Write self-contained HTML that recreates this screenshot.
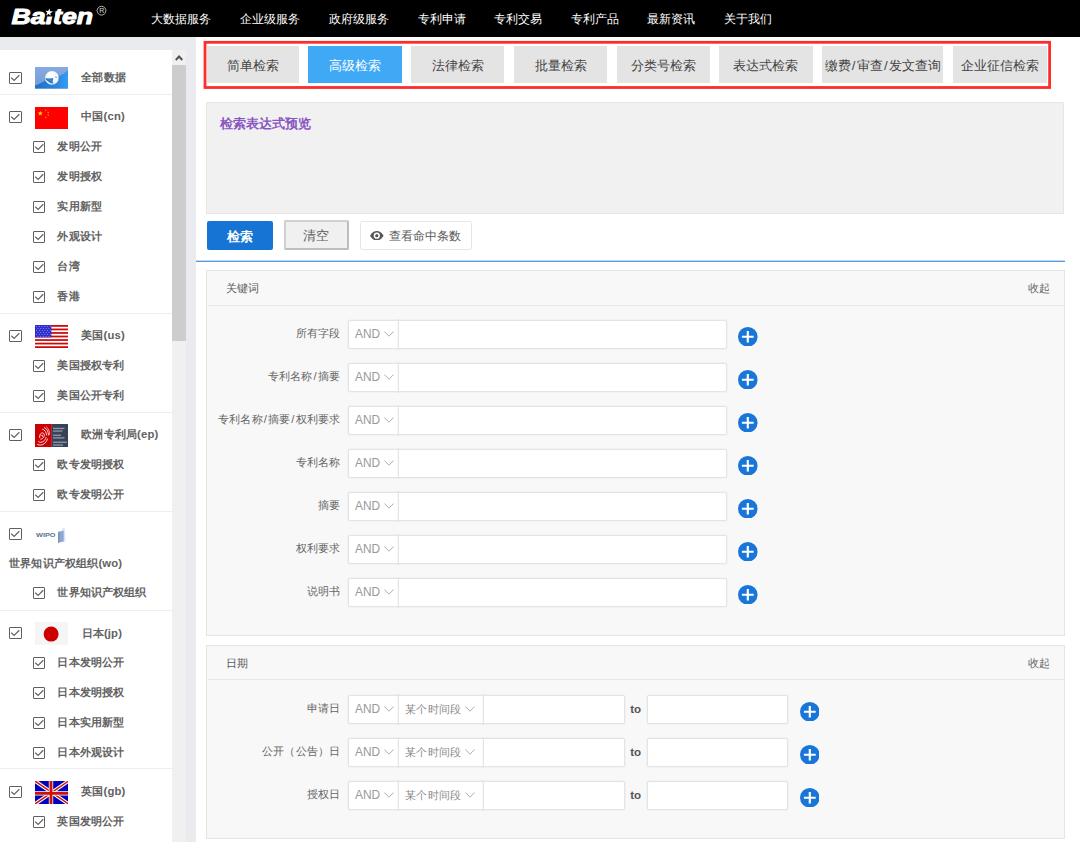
<!DOCTYPE html><html lang="zh"><head><meta charset="utf-8"><title>Baiten</title><style>
*{margin:0;padding:0;box-sizing:border-box}
html,body{width:1080px;height:842px;overflow:hidden;background:#fff}
body{position:relative;font-family:"Liberation Sans",sans-serif;color:#666}
.a{position:absolute;white-space:nowrap}
#nav{left:0;top:0;width:1080px;height:37px;background:#000}
.ni{top:9px;height:20px;line-height:20px;font-size:12.2px;color:#fff}
#strip{left:0;top:37px;width:196px;height:805px;background:#e9ebef}
#side{left:0;top:49.7px;width:172.2px;height:793px;background:#fff}
#track{left:172.2px;top:49.7px;width:14.2px;height:793px;background:#f0f0f0}
#thumb{left:172.2px;top:65.3px;width:13.7px;height:275.7px;background:#cdcdcd}
.sep{left:0;width:171.5px;height:1px;background:#eee}
.cb{width:12.5px;height:12.1px;border:1.1px solid #5f5f5f;border-radius:1px;background:#fff}
.cb svg{position:absolute;left:0;top:0;width:100%;height:100%}
.st{font-size:11.3px;letter-spacing:.15px;font-weight:bold;color:#626262;height:16px;line-height:16px}
.tab{top:45.9px;height:36.9px;line-height:39px;background:#e4e4e4;color:#444;font-size:13.2px;text-align:center}
.tab.on{background:#3fa9f5;color:#fff}
#red{left:203.9px;top:41.1px;width:1147px;height:47.6px;border:2.5px solid #f22}
#prev{left:206.3px;top:102.3px;width:858px;height:111.5px;background:#f1f1f1;border:1px solid #e6e6e6}
.panel{left:206.2px;width:858.8px;background:#f8f8f8;border:1px solid #e4e4e4}
.ph{left:0;top:0;right:0;border-bottom:1px solid #e6e6e6}
.lbl{font-size:11.3px;letter-spacing:.15px;color:#666;height:16px;line-height:16px;text-align:right}
.box{background:#fff;border:1px solid #e4e4e4;height:29px;box-shadow:0 0 0 1px rgba(0,0,0,.022)}
.and{font-size:11.9px;color:#999;height:16px;line-height:16px}
.chev{width:10px;height:6px}
.plus{width:19.6px;height:19.6px}
.hd{font-size:11.3px;letter-spacing:.2px;color:#5a5a5a;height:16px;line-height:16px}
</style></head><body>
<div id="nav" class="a">
<svg class="a" style="left:0;top:0" width="135" height="37" viewBox="0 0 135 37"><text x="11.6" y="24.1" font-family="Liberation Sans, sans-serif" font-weight="bold" font-style="italic" font-size="22.2" fill="#fff" stroke="#fff" stroke-width="1" stroke-linejoin="round" textLength="81.4" lengthAdjust="spacingAndGlyphs">Ba&#x131;ten</text><polygon points="47.2,16.4 54.6,16.4 55.6,11.5 48.2,11.5" fill="#000"/><polygon points="49.48,8.54 50.05,11.23 52.75,11.76 50.36,13.13 50.70,15.86 48.66,14.02 46.16,15.18 47.28,12.67 45.41,10.65 48.15,10.95" fill="#fff"/><circle cx="101.5" cy="10.7" r="4.4" fill="none" stroke="#d8d8d8" stroke-width="0.8"/><text x="99.3" y="13.3" font-family="Liberation Sans, sans-serif" font-size="7" fill="#d8d8d8">R</text></svg>
<div class="a ni" style="left:151px">大数据服务</div>
<div class="a ni" style="left:240px">企业级服务</div>
<div class="a ni" style="left:329px">政府级服务</div>
<div class="a ni" style="left:417.7px">专利申请</div>
<div class="a ni" style="left:494.3px">专利交易</div>
<div class="a ni" style="left:571px">专利产品</div>
<div class="a ni" style="left:647.3px">最新资讯</div>
<div class="a ni" style="left:723.7px">关于我们</div>
</div>
<div id="strip" class="a"></div><div id="side" class="a"></div><div id="track" class="a"></div><div id="thumb" class="a"></div>
<svg class="a" style="left:172.2px;top:49.4px" width="14.2" height="16" viewBox="0 0 14.2 16"><path d="M3.8 11 L7.05 7.5 L10.3 11" fill="none" stroke="#505050" stroke-width="1.9"/></svg>
<div class="a cb" style="left:9.0px;top:71.8px"><svg viewBox="0 0 13 12"><path d="M1.5 5.6 L5.1 8.9 L11.5 2.5" fill="none" stroke="#666" stroke-width="1.6"/></svg></div>
<svg class="a" style="left:34.8px;top:67.3px" width="33.4" height="21.6" viewBox="0 0 33.4 21.3" preserveAspectRatio="none"><defs><linearGradient id="g1" x1="0" y1="0" x2="0" y2="1"><stop offset="0" stop-color="#86abe0"/><stop offset="1" stop-color="#6f9bd8"/></linearGradient><linearGradient id="g2" x1="0" y1="0" x2="1" y2="0"><stop offset="0" stop-color="#1f70c6"/><stop offset="0.6" stop-color="#2a84dc"/><stop offset="1" stop-color="#379cf2"/></linearGradient><radialGradient id="g3" cx="0.42" cy="0.35" r="0.75"><stop offset="0" stop-color="#fff"/><stop offset="0.75" stop-color="#f2f6fb"/><stop offset="1" stop-color="#c8d8ea"/></radialGradient><clipPath id="gc"><circle cx="16.9" cy="10.8" r="6.8"/></clipPath></defs><rect width="33.4" height="21.3" fill="url(#g1)"/><path d="M0 21.3 L0 18.3 C6 16.5 9 13.5 14 12.2 C22 10.5 28 8 33.4 2.6 L33.4 21.3 Z" fill="url(#g2)"/><circle cx="16.9" cy="10.8" r="6.8" fill="url(#g3)"/><g clip-path="url(#gc)"><path d="M10 11.5 C12 10.7 14.5 11.7 16.4 11 C17.8 10.5 18.6 11.1 18.2 12.1 C17.6 13.5 17.4 14.6 18.6 16.3 C16.6 16.7 14.7 15.6 13.3 14.5 C11.9 13.4 10.8 12.5 10 11.5 Z" fill="#1e74cc" opacity=".9"/><path d="M19.6 9.6 c1.2 -.4 2.2 .2 2.6 1.2 c-.8 .2 -1.8 0 -2.6 -1.2z" fill="#6aa6e4" opacity=".8"/></g></svg>
<div class="a st" style="left:81.3px;top:69.2px">全部数据</div>
<div class="a sep" style="top:94.4px"></div>
<div class="a cb" style="left:9.0px;top:111.1px"><svg viewBox="0 0 13 12"><path d="M1.5 5.6 L5.1 8.9 L11.5 2.5" fill="none" stroke="#666" stroke-width="1.6"/></svg></div>
<svg class="a" style="left:34.6px;top:106.6px" width="33.5" height="22.6" viewBox="0 0 33.6 23" preserveAspectRatio="none"><rect width="33.6" height="23" fill="#fe0000"/><polygon points="5.30,3.80 5.93,5.63 7.87,5.67 6.33,6.83 6.89,8.68 5.30,7.58 3.71,8.68 4.27,6.83 2.73,5.67 4.67,5.63" fill="#ffde00"/><polygon points="10.80,2.35 11.02,2.99 11.70,3.01 11.16,3.42 11.36,4.07 10.80,3.68 10.24,4.07 10.44,3.42 9.90,3.01 10.58,2.99" fill="#ffde00"/><polygon points="13.20,4.55 13.42,5.19 14.10,5.21 13.56,5.62 13.76,6.27 13.20,5.88 12.64,6.27 12.84,5.62 12.30,5.21 12.98,5.19" fill="#ffde00"/><polygon points="13.20,7.25 13.42,7.89 14.10,7.91 13.56,8.32 13.76,8.97 13.20,8.58 12.64,8.97 12.84,8.32 12.30,7.91 12.98,7.89" fill="#ffde00"/><polygon points="10.90,9.85 11.12,10.49 11.80,10.51 11.26,10.92 11.46,11.57 10.90,11.18 10.34,11.57 10.54,10.92 10.00,10.51 10.68,10.49" fill="#ffde00"/></svg>
<div class="a st" style="left:81.3px;top:108.3px">中国(cn)</div>
<div class="a cb" style="left:32.8px;top:141.0px"><svg viewBox="0 0 13 12"><path d="M1.5 5.6 L5.1 8.9 L11.5 2.5" fill="none" stroke="#666" stroke-width="1.6"/></svg></div>
<div class="a st" style="left:57.4px;top:138.4px">发明公开</div>
<div class="a cb" style="left:32.8px;top:171.0px"><svg viewBox="0 0 13 12"><path d="M1.5 5.6 L5.1 8.9 L11.5 2.5" fill="none" stroke="#666" stroke-width="1.6"/></svg></div>
<div class="a st" style="left:57.4px;top:168.4px">发明授权</div>
<div class="a cb" style="left:32.8px;top:201.0px"><svg viewBox="0 0 13 12"><path d="M1.5 5.6 L5.1 8.9 L11.5 2.5" fill="none" stroke="#666" stroke-width="1.6"/></svg></div>
<div class="a st" style="left:57.4px;top:198.4px">实用新型</div>
<div class="a cb" style="left:32.8px;top:231.0px"><svg viewBox="0 0 13 12"><path d="M1.5 5.6 L5.1 8.9 L11.5 2.5" fill="none" stroke="#666" stroke-width="1.6"/></svg></div>
<div class="a st" style="left:57.4px;top:228.4px">外观设计</div>
<div class="a cb" style="left:32.8px;top:261.0px"><svg viewBox="0 0 13 12"><path d="M1.5 5.6 L5.1 8.9 L11.5 2.5" fill="none" stroke="#666" stroke-width="1.6"/></svg></div>
<div class="a st" style="left:57.4px;top:258.4px">台湾</div>
<div class="a cb" style="left:32.8px;top:291.0px"><svg viewBox="0 0 13 12"><path d="M1.5 5.6 L5.1 8.9 L11.5 2.5" fill="none" stroke="#666" stroke-width="1.6"/></svg></div>
<div class="a st" style="left:57.4px;top:288.4px">香港</div>
<div class="a sep" style="top:312.7px"></div>
<div class="a cb" style="left:9.0px;top:329.9px"><svg viewBox="0 0 13 12"><path d="M1.5 5.6 L5.1 8.9 L11.5 2.5" fill="none" stroke="#666" stroke-width="1.6"/></svg></div>
<svg class="a" style="left:34.5px;top:325.0px" width="33.6" height="23" viewBox="0 0 33.6 23"><rect width="33.6" height="23" fill="#fff"/><rect x="0" y="0.00" width="33.6" height="1.77" fill="#cc0a0a"/><rect x="0" y="3.54" width="33.6" height="1.77" fill="#cc0a0a"/><rect x="0" y="7.08" width="33.6" height="1.77" fill="#cc0a0a"/><rect x="0" y="10.62" width="33.6" height="1.77" fill="#cc0a0a"/><rect x="0" y="14.15" width="33.6" height="1.77" fill="#cc0a0a"/><rect x="0" y="17.69" width="33.6" height="1.77" fill="#cc0a0a"/><rect x="0" y="21.23" width="33.6" height="1.77" fill="#cc0a0a"/><rect x="0" y="0" width="16.4" height="12.38" fill="#2c2ccc"/><circle cx="1.60" cy="1.40" r="0.55" fill="#8a8ae8"/><circle cx="4.35" cy="1.40" r="0.55" fill="#8a8ae8"/><circle cx="7.10" cy="1.40" r="0.55" fill="#8a8ae8"/><circle cx="9.85" cy="1.40" r="0.55" fill="#8a8ae8"/><circle cx="12.60" cy="1.40" r="0.55" fill="#8a8ae8"/><circle cx="15.35" cy="1.40" r="0.55" fill="#8a8ae8"/><circle cx="2.95" cy="3.40" r="0.55" fill="#8a8ae8"/><circle cx="5.70" cy="3.40" r="0.55" fill="#8a8ae8"/><circle cx="8.45" cy="3.40" r="0.55" fill="#8a8ae8"/><circle cx="11.20" cy="3.40" r="0.55" fill="#8a8ae8"/><circle cx="13.95" cy="3.40" r="0.55" fill="#8a8ae8"/><circle cx="1.60" cy="5.40" r="0.55" fill="#8a8ae8"/><circle cx="4.35" cy="5.40" r="0.55" fill="#8a8ae8"/><circle cx="7.10" cy="5.40" r="0.55" fill="#8a8ae8"/><circle cx="9.85" cy="5.40" r="0.55" fill="#8a8ae8"/><circle cx="12.60" cy="5.40" r="0.55" fill="#8a8ae8"/><circle cx="15.35" cy="5.40" r="0.55" fill="#8a8ae8"/><circle cx="2.95" cy="7.40" r="0.55" fill="#8a8ae8"/><circle cx="5.70" cy="7.40" r="0.55" fill="#8a8ae8"/><circle cx="8.45" cy="7.40" r="0.55" fill="#8a8ae8"/><circle cx="11.20" cy="7.40" r="0.55" fill="#8a8ae8"/><circle cx="13.95" cy="7.40" r="0.55" fill="#8a8ae8"/><circle cx="1.60" cy="9.40" r="0.55" fill="#8a8ae8"/><circle cx="4.35" cy="9.40" r="0.55" fill="#8a8ae8"/><circle cx="7.10" cy="9.40" r="0.55" fill="#8a8ae8"/><circle cx="9.85" cy="9.40" r="0.55" fill="#8a8ae8"/><circle cx="12.60" cy="9.40" r="0.55" fill="#8a8ae8"/><circle cx="15.35" cy="9.40" r="0.55" fill="#8a8ae8"/><circle cx="2.95" cy="11.40" r="0.55" fill="#8a8ae8"/><circle cx="5.70" cy="11.40" r="0.55" fill="#8a8ae8"/><circle cx="8.45" cy="11.40" r="0.55" fill="#8a8ae8"/><circle cx="11.20" cy="11.40" r="0.55" fill="#8a8ae8"/><circle cx="13.95" cy="11.40" r="0.55" fill="#8a8ae8"/></svg>
<div class="a st" style="left:81.3px;top:326.9px">美国(us)</div>
<div class="a cb" style="left:32.8px;top:359.7px"><svg viewBox="0 0 13 12"><path d="M1.5 5.6 L5.1 8.9 L11.5 2.5" fill="none" stroke="#666" stroke-width="1.6"/></svg></div>
<div class="a st" style="left:57.4px;top:357.1px">美国授权专利</div>
<div class="a cb" style="left:32.8px;top:389.7px"><svg viewBox="0 0 13 12"><path d="M1.5 5.6 L5.1 8.9 L11.5 2.5" fill="none" stroke="#666" stroke-width="1.6"/></svg></div>
<div class="a st" style="left:57.4px;top:387.1px">美国公开专利</div>
<div class="a sep" style="top:411.6px"></div>
<div class="a cb" style="left:9.0px;top:428.9px"><svg viewBox="0 0 13 12"><path d="M1.5 5.6 L5.1 8.9 L11.5 2.5" fill="none" stroke="#666" stroke-width="1.6"/></svg></div>
<svg class="a" style="left:34.5px;top:424.0px" width="33.6" height="23" viewBox="0 0 33.6 23"><rect width="16.8" height="23" fill="#cc0000"/><rect x="16.6" width="17" height="23" fill="#3a4256"/><g fill="none" stroke="#fff" stroke-width="0.9" stroke-linecap="round" opacity=".95"><path d="M2.5 20.5 C7 22.5 11 19.5 12.5 15"/><path d="M3.6 17.8 C7 19.6 10 17 11 13.5"/><path d="M4.6 13.5 C4 9.5 7.5 7.5 9 9.8 C10.2 12 8 15.2 5.8 15.2"/><path d="M6.3 11.3 C6.9 10.3 7.9 11 7.5 12.4"/><path d="M7.6 5.2 C10 5.8 11.4 8.4 11.6 11"/><path d="M9.4 3.6 C12 4.6 13.4 7.6 13.5 11"/><path d="M11.4 2.8 C13.6 4.4 14.6 7.4 14.6 10.4" stroke="#f2b0b0"/></g><rect x="18" y="3.8" width="11.5" height="1.3" fill="#8f98ae"/><rect x="18" y="6.4" width="9.5" height="1.3" fill="#8f98ae"/><rect x="18" y="10.6" width="8.0" height="1.3" fill="#8f98ae"/><rect x="18" y="13.2" width="11.5" height="1.3" fill="#8f98ae"/><rect x="18" y="17.6" width="13.8" height="1.3" fill="#8f98ae"/><rect x="18" y="20.4" width="10.0" height="1.3" fill="#8f98ae"/></svg>
<div class="a st" style="left:81.3px;top:425.7px">欧洲专利局(ep)</div>
<div class="a cb" style="left:32.8px;top:458.7px"><svg viewBox="0 0 13 12"><path d="M1.5 5.6 L5.1 8.9 L11.5 2.5" fill="none" stroke="#666" stroke-width="1.6"/></svg></div>
<div class="a st" style="left:57.4px;top:456.1px">欧专发明授权</div>
<div class="a cb" style="left:32.8px;top:488.7px"><svg viewBox="0 0 13 12"><path d="M1.5 5.6 L5.1 8.9 L11.5 2.5" fill="none" stroke="#666" stroke-width="1.6"/></svg></div>
<div class="a st" style="left:57.4px;top:486.1px">欧专发明公开</div>
<div class="a sep" style="top:510.5px"></div>
<div class="a cb" style="left:9.0px;top:528.1px"><svg viewBox="0 0 13 12"><path d="M1.5 5.6 L5.1 8.9 L11.5 2.5" fill="none" stroke="#666" stroke-width="1.6"/></svg></div>
<svg class="a" style="left:34.5px;top:526px" width="33.6" height="18" viewBox="0 0 33.6 18"><text x="1" y="10.9" font-family="Liberation Sans, sans-serif" font-weight="bold" font-size="6.1" fill="#5a7192" textLength="19.5" lengthAdjust="spacingAndGlyphs">WIPO</text><path d="M27.2 2.2 L29.6 1.2 L30.6 15 L28.6 16 Z" fill="#d6e6f4"/><path d="M23 6 L28.6 4.6 L28.8 15.6 L23 16.8 Z" fill="#8ea6d2"/><path d="M23 6 L24.6 5.6 L24.6 16.4 L23 16.8 Z" fill="#7a93c6"/></svg>
<div class="a st" style="left:9.2px;top:554.7px">世界知识产权组织(wo)</div>
<div class="a cb" style="left:32.8px;top:586.9px"><svg viewBox="0 0 13 12"><path d="M1.5 5.6 L5.1 8.9 L11.5 2.5" fill="none" stroke="#666" stroke-width="1.6"/></svg></div>
<div class="a st" style="left:57.4px;top:584.3px">世界知识产权组织</div>
<div class="a sep" style="top:610.0px"></div>
<div class="a cb" style="left:9.0px;top:627.0px"><svg viewBox="0 0 13 12"><path d="M1.5 5.6 L5.1 8.9 L11.5 2.5" fill="none" stroke="#666" stroke-width="1.6"/></svg></div>
<svg class="a" style="left:34.6px;top:622.2px" width="33" height="22.8" viewBox="0 0 33 22.8"><rect width="33" height="22.8" fill="#f5f5f5"/><circle cx="16.1" cy="12.1" r="7.5" fill="#cc0000"/></svg>
<div class="a st" style="left:81.6px;top:624.7px">日本(jp)</div>
<div class="a cb" style="left:32.8px;top:656.8px"><svg viewBox="0 0 13 12"><path d="M1.5 5.6 L5.1 8.9 L11.5 2.5" fill="none" stroke="#666" stroke-width="1.6"/></svg></div>
<div class="a st" style="left:57.4px;top:654.2px">日本发明公开</div>
<div class="a cb" style="left:32.8px;top:686.8px"><svg viewBox="0 0 13 12"><path d="M1.5 5.6 L5.1 8.9 L11.5 2.5" fill="none" stroke="#666" stroke-width="1.6"/></svg></div>
<div class="a st" style="left:57.4px;top:684.2px">日本发明授权</div>
<div class="a cb" style="left:32.8px;top:716.8px"><svg viewBox="0 0 13 12"><path d="M1.5 5.6 L5.1 8.9 L11.5 2.5" fill="none" stroke="#666" stroke-width="1.6"/></svg></div>
<div class="a st" style="left:57.4px;top:714.2px">日本实用新型</div>
<div class="a cb" style="left:32.8px;top:746.8px"><svg viewBox="0 0 13 12"><path d="M1.5 5.6 L5.1 8.9 L11.5 2.5" fill="none" stroke="#666" stroke-width="1.6"/></svg></div>
<div class="a st" style="left:57.4px;top:744.2px">日本外观设计</div>
<div class="a sep" style="top:768.3px"></div>
<div class="a cb" style="left:9.0px;top:786.1px"><svg viewBox="0 0 13 12"><path d="M1.5 5.6 L5.1 8.9 L11.5 2.5" fill="none" stroke="#666" stroke-width="1.6"/></svg></div>
<svg class="a" style="left:34.5px;top:781.0px" width="33.6" height="23" viewBox="0 0 33.6 23"><clipPath id="gbc"><rect width="33.6" height="23"/></clipPath><g clip-path="url(#gbc)"><rect width="33.6" height="23" fill="#0000bf"/><path d="M0 0 L33.6 23 M33.6 0 L0 23" stroke="#fff" stroke-width="3.6"/><path d="M0 0 L33.6 23 M33.6 0 L0 23" stroke="#d01a10" stroke-width="1.5"/><path d="M16 0 V23 M0 12.4 H33.6" stroke="#fff" stroke-width="4.4"/><path d="M16 0 V23 M0 12.4 H33.6" stroke="#d01000" stroke-width="2.9"/></g></svg>
<div class="a st" style="left:81.3px;top:783.1px">英国(gb)</div>
<div class="a cb" style="left:32.8px;top:815.5px"><svg viewBox="0 0 13 12"><path d="M1.5 5.6 L5.1 8.9 L11.5 2.5" fill="none" stroke="#666" stroke-width="1.6"/></svg></div>
<div class="a st" style="left:57.4px;top:812.9px">英国发明公开</div>
<svg class="a" style="left:200px;top:38px" width="860" height="56" viewBox="200 38 860 56"><rect x="205" y="42.3" width="844.6" height="45.2" fill="none" stroke="#ff2c2c" stroke-width="2.8"/></svg>
<div class="a tab" style="left:207.0px;width:92.0px">简单检索</div>
<div class="a tab on" style="left:308.2px;width:93.6px">高级检索</div>
<div class="a tab" style="left:411.0px;width:93.4px">法律检索</div>
<div class="a tab" style="left:513.9px;width:93.3px">批量检索</div>
<div class="a tab" style="left:616.7px;width:93.3px">分类号检索</div>
<div class="a tab" style="left:719.2px;width:93.6px">表达式检索</div>
<div class="a tab" style="left:822.2px;width:121.1px">缴费<span style="margin:0 1.25px">/</span>审查<span style="margin:0 1.25px">/</span>发文查询</div>
<div class="a tab" style="left:953.0px;width:93.7px">企业征信检索</div>
<div id="prev" class="a"></div>
<div class="a" style="left:220.3px;top:114.6px;height:18px;line-height:18px;font-size:13.05px;font-weight:bold;color:#8a56c2">检索表达式预览</div>
<div class="a" style="left:207.3px;top:220.6px;width:65.7px;height:29.6px;background:#1574d4;border-radius:2px;color:#fff;font-weight:bold;font-size:13.2px;line-height:31.6px;text-align:center">检索</div>
<div class="a" style="left:283.6px;top:220.4px;width:65.8px;height:29.9px;background:#f0f0f0;border:2px solid;border-color:#d0d0d0 #bdbdbd #bdbdbd #d0d0d0;border-radius:2px;color:#5e5e5e;font-size:13.2px;line-height:27.6px;text-align:center">清空</div>
<div class="a" style="left:359.9px;top:220.6px;width:111.8px;height:29.6px;background:#fff;border:1px solid #e6e6e6;border-radius:2.5px"></div>
<svg class="a" style="left:370.2px;top:230.6px" width="13.6" height="9.4" viewBox="0 0 13.6 9.4"><path d="M0 4.7 C2 1.2 4.4 0 6.8 0 C9.2 0 11.6 1.2 13.6 4.7 C11.6 8.2 9.2 9.4 6.8 9.4 C4.4 9.4 2 8.2 0 4.7 Z" fill="#555"/><circle cx="6.8" cy="4.7" r="3.1" fill="#fff"/><circle cx="6.8" cy="4.7" r="1.6" fill="#555"/></svg>
<div class="a" style="left:388.9px;top:228.4px;height:17px;line-height:17px;font-size:12.3px;letter-spacing:.1px;color:#5a5a5a">查看命中条数</div>
<div class="a" style="left:196px;top:260px;width:869px;height:1px;background:#bfd8f4"></div><div class="a" style="left:196px;top:261px;width:869px;height:1px;background:#5a9ae0"></div>
<div class="a panel" style="top:270.4px;height:365.6px"></div>
<div class="a" style="left:207.5px;top:304.8px;width:856.5px;height:1px;background:#e8e8e8"></div>
<div class="a hd" style="left:226px;top:279.8px">关键词</div>
<div class="a hd" style="left:1027.8px;top:279.8px;color:#666">收起</div>
<div class="a lbl" style="left:196px;width:144.2px;top:324.9px">所有字段</div>
<div class="a box" style="left:347.6px;top:319.8px;width:51.4px;border-radius:2px 0 0 2px"></div>
<div class="a box" style="left:398px;top:319.8px;width:329px;border-radius:0 2px 2px 0"></div>
<div class="a and" style="left:355.1px;top:326.1px">AND</div>
<svg class="a chev" style="left:384.4px;top:330.8px" viewBox="0 0 10 6"><path d="M0.4 0.5 L5 5.2 L9.6 0.5" fill="none" stroke="#adadad" stroke-width="1"/></svg>
<svg class="a plus" style="left:738.0px;top:326.9px" viewBox="0 0 20 20"><circle cx="10" cy="10" r="10" fill="#1976d8"/><path d="M4 10 H16 M10 4.2 V15.8" stroke="#fff" stroke-width="2.2" fill="none"/></svg>
<div class="a lbl" style="left:196px;width:144.2px;top:367.9px">专利名称<span style="margin:0 1px">/</span>摘要</div>
<div class="a box" style="left:347.6px;top:362.8px;width:51.4px;border-radius:2px 0 0 2px"></div>
<div class="a box" style="left:398px;top:362.8px;width:329px;border-radius:0 2px 2px 0"></div>
<div class="a and" style="left:355.1px;top:369.1px">AND</div>
<svg class="a chev" style="left:384.4px;top:373.8px" viewBox="0 0 10 6"><path d="M0.4 0.5 L5 5.2 L9.6 0.5" fill="none" stroke="#adadad" stroke-width="1"/></svg>
<svg class="a plus" style="left:738.0px;top:369.9px" viewBox="0 0 20 20"><circle cx="10" cy="10" r="10" fill="#1976d8"/><path d="M4 10 H16 M10 4.2 V15.8" stroke="#fff" stroke-width="2.2" fill="none"/></svg>
<div class="a lbl" style="left:196px;width:144.2px;top:410.9px">专利名称<span style="margin:0 1px">/</span>摘要<span style="margin:0 1px">/</span>权利要求</div>
<div class="a box" style="left:347.6px;top:405.8px;width:51.4px;border-radius:2px 0 0 2px"></div>
<div class="a box" style="left:398px;top:405.8px;width:329px;border-radius:0 2px 2px 0"></div>
<div class="a and" style="left:355.1px;top:412.1px">AND</div>
<svg class="a chev" style="left:384.4px;top:416.8px" viewBox="0 0 10 6"><path d="M0.4 0.5 L5 5.2 L9.6 0.5" fill="none" stroke="#adadad" stroke-width="1"/></svg>
<svg class="a plus" style="left:738.0px;top:412.9px" viewBox="0 0 20 20"><circle cx="10" cy="10" r="10" fill="#1976d8"/><path d="M4 10 H16 M10 4.2 V15.8" stroke="#fff" stroke-width="2.2" fill="none"/></svg>
<div class="a lbl" style="left:196px;width:144.2px;top:453.9px">专利名称</div>
<div class="a box" style="left:347.6px;top:448.8px;width:51.4px;border-radius:2px 0 0 2px"></div>
<div class="a box" style="left:398px;top:448.8px;width:329px;border-radius:0 2px 2px 0"></div>
<div class="a and" style="left:355.1px;top:455.1px">AND</div>
<svg class="a chev" style="left:384.4px;top:459.8px" viewBox="0 0 10 6"><path d="M0.4 0.5 L5 5.2 L9.6 0.5" fill="none" stroke="#adadad" stroke-width="1"/></svg>
<svg class="a plus" style="left:738.0px;top:455.9px" viewBox="0 0 20 20"><circle cx="10" cy="10" r="10" fill="#1976d8"/><path d="M4 10 H16 M10 4.2 V15.8" stroke="#fff" stroke-width="2.2" fill="none"/></svg>
<div class="a lbl" style="left:196px;width:144.2px;top:496.9px">摘要</div>
<div class="a box" style="left:347.6px;top:491.8px;width:51.4px;border-radius:2px 0 0 2px"></div>
<div class="a box" style="left:398px;top:491.8px;width:329px;border-radius:0 2px 2px 0"></div>
<div class="a and" style="left:355.1px;top:498.1px">AND</div>
<svg class="a chev" style="left:384.4px;top:502.8px" viewBox="0 0 10 6"><path d="M0.4 0.5 L5 5.2 L9.6 0.5" fill="none" stroke="#adadad" stroke-width="1"/></svg>
<svg class="a plus" style="left:738.0px;top:498.9px" viewBox="0 0 20 20"><circle cx="10" cy="10" r="10" fill="#1976d8"/><path d="M4 10 H16 M10 4.2 V15.8" stroke="#fff" stroke-width="2.2" fill="none"/></svg>
<div class="a lbl" style="left:196px;width:144.2px;top:539.9px">权利要求</div>
<div class="a box" style="left:347.6px;top:534.8px;width:51.4px;border-radius:2px 0 0 2px"></div>
<div class="a box" style="left:398px;top:534.8px;width:329px;border-radius:0 2px 2px 0"></div>
<div class="a and" style="left:355.1px;top:541.1px">AND</div>
<svg class="a chev" style="left:384.4px;top:545.8px" viewBox="0 0 10 6"><path d="M0.4 0.5 L5 5.2 L9.6 0.5" fill="none" stroke="#adadad" stroke-width="1"/></svg>
<svg class="a plus" style="left:738.0px;top:541.9px" viewBox="0 0 20 20"><circle cx="10" cy="10" r="10" fill="#1976d8"/><path d="M4 10 H16 M10 4.2 V15.8" stroke="#fff" stroke-width="2.2" fill="none"/></svg>
<div class="a lbl" style="left:196px;width:144.2px;top:582.9px">说明书</div>
<div class="a box" style="left:347.6px;top:577.8px;width:51.4px;border-radius:2px 0 0 2px"></div>
<div class="a box" style="left:398px;top:577.8px;width:329px;border-radius:0 2px 2px 0"></div>
<div class="a and" style="left:355.1px;top:584.1px">AND</div>
<svg class="a chev" style="left:384.4px;top:588.8px" viewBox="0 0 10 6"><path d="M0.4 0.5 L5 5.2 L9.6 0.5" fill="none" stroke="#adadad" stroke-width="1"/></svg>
<svg class="a plus" style="left:738.0px;top:584.9px" viewBox="0 0 20 20"><circle cx="10" cy="10" r="10" fill="#1976d8"/><path d="M4 10 H16 M10 4.2 V15.8" stroke="#fff" stroke-width="2.2" fill="none"/></svg>
<div class="a panel" style="top:645.3px;height:193.7px"></div>
<div class="a" style="left:207.5px;top:679.4px;width:856.5px;height:1px;background:#e8e8e8"></div>
<div class="a hd" style="left:226px;top:654.5px">日期</div>
<div class="a hd" style="left:1027.8px;top:654.5px;color:#666">收起</div>
<div class="a lbl" style="left:196px;width:144.2px;top:699.9px">申请日</div>
<div class="a box" style="left:347.6px;top:694.8px;width:51.4px;border-radius:2px 0 0 2px"></div>
<div class="a box" style="left:398px;top:694.8px;width:86px"></div>
<div class="a box" style="left:483px;top:694.8px;width:141.6px;border-radius:0 2px 2px 0"></div>
<div class="a and" style="left:355.1px;top:701.1px">AND</div>
<svg class="a chev" style="left:384.4px;top:705.8px" viewBox="0 0 10 6"><path d="M0.4 0.5 L5 5.2 L9.6 0.5" fill="none" stroke="#adadad" stroke-width="1"/></svg>
<div class="a and" style="left:405px;top:701.0px;font-size:11.3px;letter-spacing:.35px;color:#8c8c8c">某个时间段</div>
<svg class="a chev" style="left:464.8px;top:705.8px" viewBox="0 0 10 6"><path d="M0.4 0.5 L5 5.2 L9.6 0.5" fill="none" stroke="#adadad" stroke-width="1"/></svg>
<div class="a" style="left:630.2px;top:700.6px;height:16px;line-height:16px;font-size:11.6px;font-weight:bold;color:#555">to</div>
<div class="a box" style="left:646.6px;top:694.8px;width:141.8px;border-radius:2px"></div>
<svg class="a plus" style="left:799.5px;top:701.9px" viewBox="0 0 20 20"><circle cx="10" cy="10" r="10" fill="#1976d8"/><path d="M4 10 H16 M10 4.2 V15.8" stroke="#fff" stroke-width="2.2" fill="none"/></svg>
<div class="a lbl" style="left:196px;width:144.2px;top:742.9px">公开（公告）日</div>
<div class="a box" style="left:347.6px;top:737.8px;width:51.4px;border-radius:2px 0 0 2px"></div>
<div class="a box" style="left:398px;top:737.8px;width:86px"></div>
<div class="a box" style="left:483px;top:737.8px;width:141.6px;border-radius:0 2px 2px 0"></div>
<div class="a and" style="left:355.1px;top:744.1px">AND</div>
<svg class="a chev" style="left:384.4px;top:748.8px" viewBox="0 0 10 6"><path d="M0.4 0.5 L5 5.2 L9.6 0.5" fill="none" stroke="#adadad" stroke-width="1"/></svg>
<div class="a and" style="left:405px;top:744.0px;font-size:11.3px;letter-spacing:.35px;color:#8c8c8c">某个时间段</div>
<svg class="a chev" style="left:464.8px;top:748.8px" viewBox="0 0 10 6"><path d="M0.4 0.5 L5 5.2 L9.6 0.5" fill="none" stroke="#adadad" stroke-width="1"/></svg>
<div class="a" style="left:630.2px;top:743.6px;height:16px;line-height:16px;font-size:11.6px;font-weight:bold;color:#555">to</div>
<div class="a box" style="left:646.6px;top:737.8px;width:141.8px;border-radius:2px"></div>
<svg class="a plus" style="left:799.5px;top:744.9px" viewBox="0 0 20 20"><circle cx="10" cy="10" r="10" fill="#1976d8"/><path d="M4 10 H16 M10 4.2 V15.8" stroke="#fff" stroke-width="2.2" fill="none"/></svg>
<div class="a lbl" style="left:196px;width:144.2px;top:785.9px">授权日</div>
<div class="a box" style="left:347.6px;top:780.8px;width:51.4px;border-radius:2px 0 0 2px"></div>
<div class="a box" style="left:398px;top:780.8px;width:86px"></div>
<div class="a box" style="left:483px;top:780.8px;width:141.6px;border-radius:0 2px 2px 0"></div>
<div class="a and" style="left:355.1px;top:787.1px">AND</div>
<svg class="a chev" style="left:384.4px;top:791.8px" viewBox="0 0 10 6"><path d="M0.4 0.5 L5 5.2 L9.6 0.5" fill="none" stroke="#adadad" stroke-width="1"/></svg>
<div class="a and" style="left:405px;top:787.0px;font-size:11.3px;letter-spacing:.35px;color:#8c8c8c">某个时间段</div>
<svg class="a chev" style="left:464.8px;top:791.8px" viewBox="0 0 10 6"><path d="M0.4 0.5 L5 5.2 L9.6 0.5" fill="none" stroke="#adadad" stroke-width="1"/></svg>
<div class="a" style="left:630.2px;top:786.6px;height:16px;line-height:16px;font-size:11.6px;font-weight:bold;color:#555">to</div>
<div class="a box" style="left:646.6px;top:780.8px;width:141.8px;border-radius:2px"></div>
<svg class="a plus" style="left:799.5px;top:787.9px" viewBox="0 0 20 20"><circle cx="10" cy="10" r="10" fill="#1976d8"/><path d="M4 10 H16 M10 4.2 V15.8" stroke="#fff" stroke-width="2.2" fill="none"/></svg>
</body></html>
